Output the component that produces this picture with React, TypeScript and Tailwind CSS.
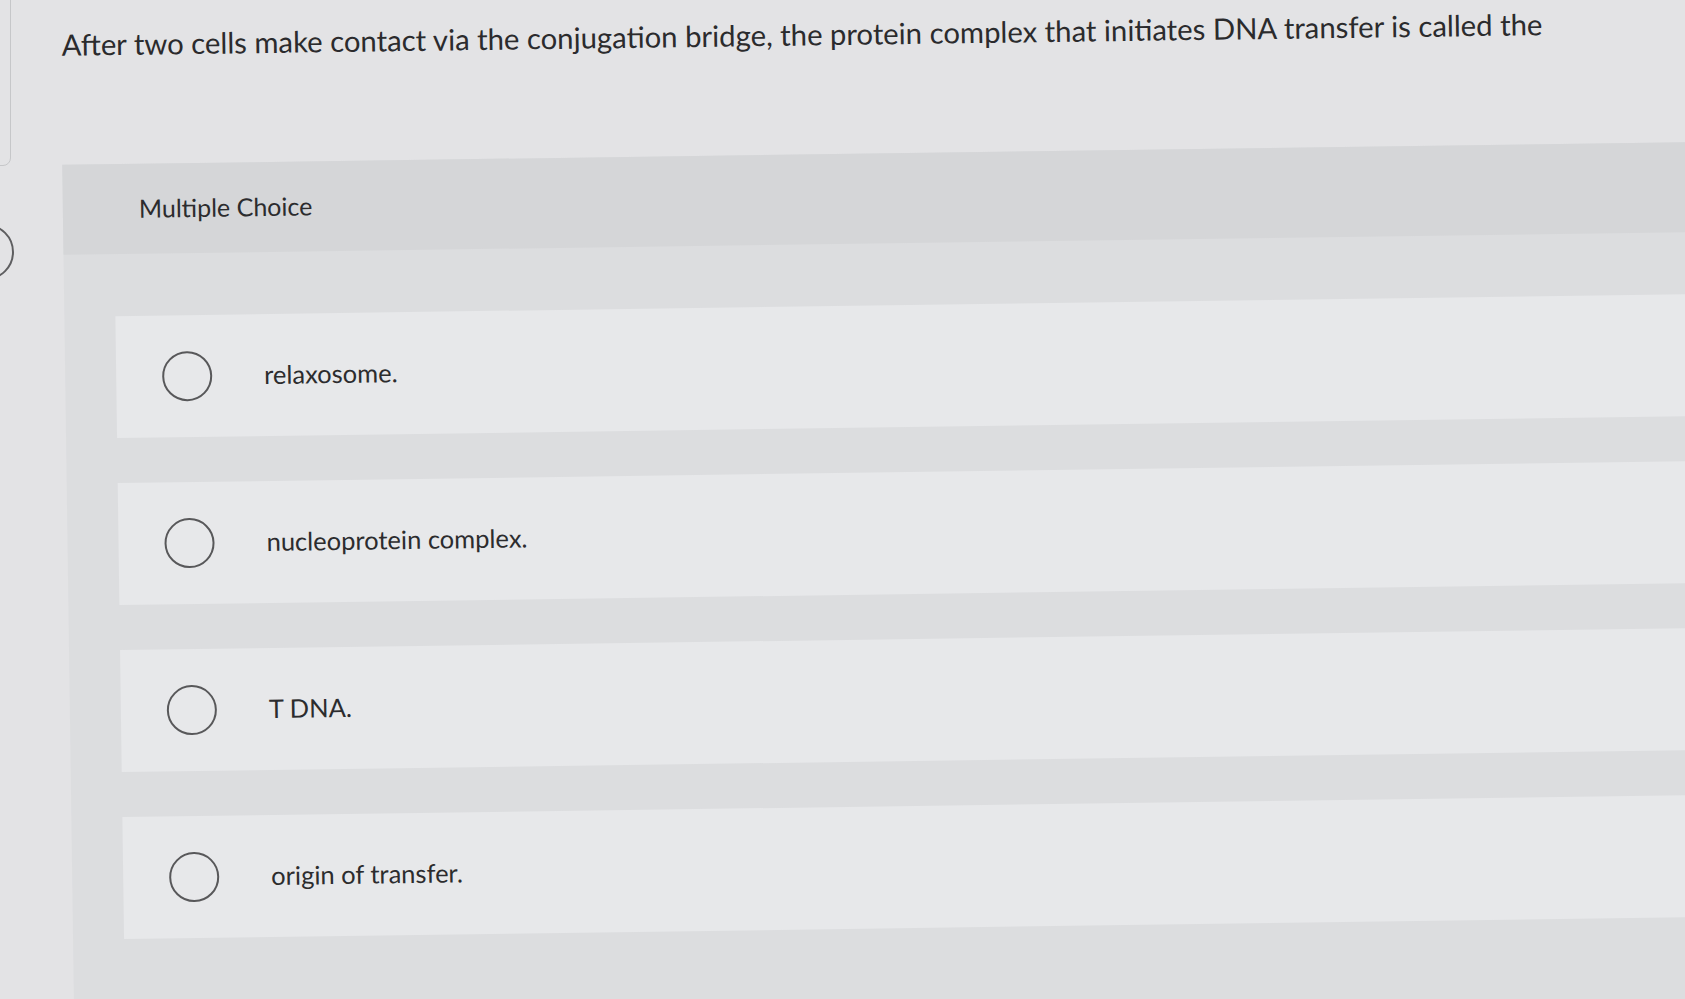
import { memo } from 'react';

/**
 * Answer choices for the question.
 */
const CHOICES: string[] = ['relaxosome.', 'nucleoprotein complex.', 'T DNA.', 'origin of transfer.'];

/**
 * One selectable answer row with an empty radio circle.
 */
const Choice = ({ label }: { label: string }) => (
  <div className="flex h-[122px] items-center bg-[#e7e8ea] pl-[46px]">
    <span className="h-[50px] w-[50px] shrink-0 rounded-full border-2 border-[#58585a]" />
    <span className="ml-[52px] text-[25.5px] leading-none text-[#2c2c2e]">{label}</span>
  </div>
);

const App: React.FC = memo(() => {
  return (
    <div className="relative h-[999px] w-full overflow-hidden bg-[#e3e3e5] font-['Lato',sans-serif]">
      {/* Page content, slightly tilted like the photographed screen */}
      <div className="h-[1060px] w-[1740px] origin-[842px_500px] rotate-[-0.8deg]">
        <h1 className="pl-[68px] pt-[16px] text-[29.3px] leading-[36px] text-[#2b2b2d]">
          After two cells make contact via the conjugation bridge, the protein complex that initiates DNA transfer is
          called the
        </h1>

        <section className="ml-[67px] mt-[102px] min-h-[900px] bg-[#dcdddf]">
          <div className="flex h-[90px] items-center bg-[#d5d6d8] pl-[76px] text-[25px] text-[#2c2c2e]">
            Multiple Choice
          </div>

          {/* Options */}
          <div className="flex flex-col gap-[45px] pl-[51px] pt-[62px]">
            {CHOICES.map((c) => (
              <Choice key={c} label={c} />
            ))}
          </div>
        </section>
      </div>

      {/* Edge of neighbouring panel and button on the far left */}
      <div className="absolute -left-[20px] -top-[20px] h-[186px] w-[31px] rounded-lg border border-[#c6c7c9]" />
      <div className="absolute -left-[42px] top-[224px] h-[56px] w-[56px] rounded-full border-2 border-[#5e5e60]" />
    </div>
  );
});

App.displayName = 'App';

export default App;
